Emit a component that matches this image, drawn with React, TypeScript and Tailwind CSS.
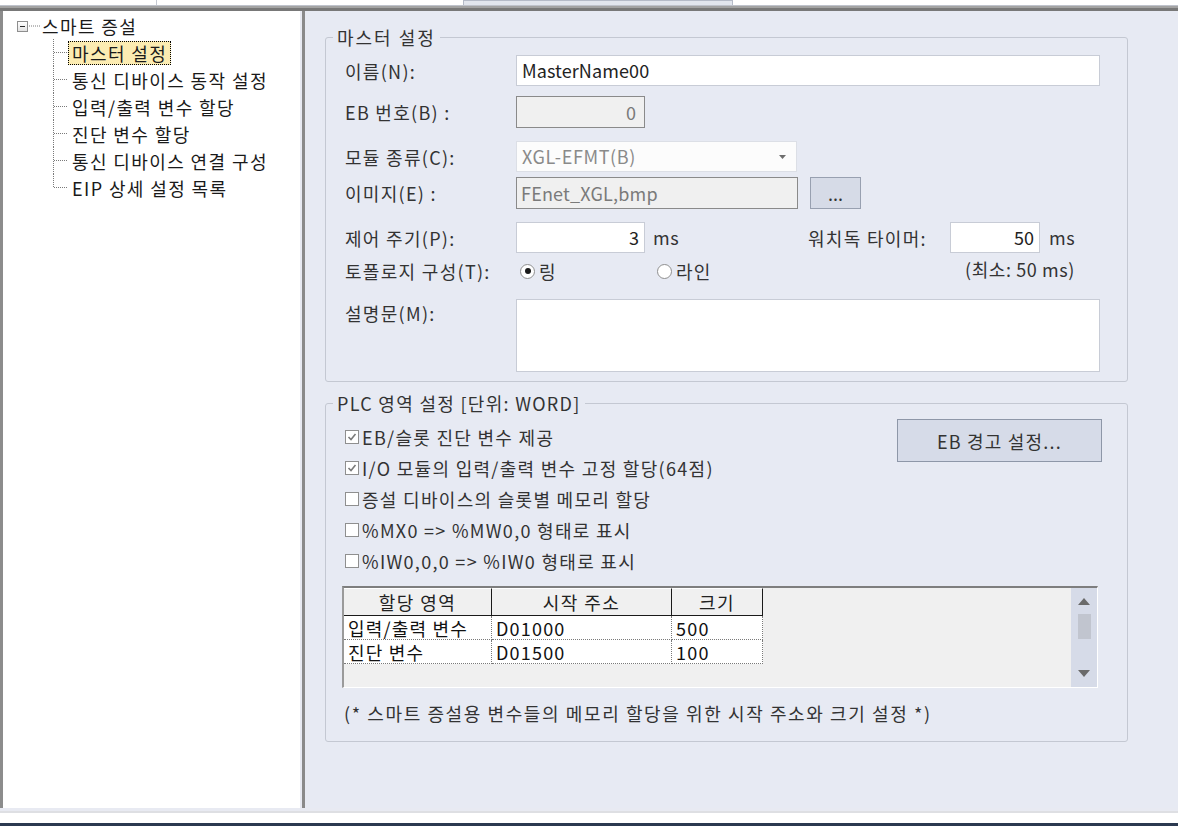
import React from "react";

const treeItems = [
  "마스터 설정",
  "통신 디바이스 동작 설정",
  "입력/출력 변수 할당",
  "진단 변수 할당",
  "통신 디바이스 연결 구성",
  "EIP 상세 설정 목록",
];

function Connector({ last }: { last?: boolean }) {
  return (
    <svg width="16" height="27" className="shrink-0">
      <line x1="1.5" y1="0" x2="1.5" y2={last ? 13.5 : 27} stroke="#7a7a7a" strokeDasharray="1 1" />
      <line x1="2" y1="13.5" x2="16" y2="13.5" stroke="#7a7a7a" strokeDasharray="1 1" />
    </svg>
  );
}

function Tree() {
  return (
    <div className="flex-1 bg-white pt-[2px] text-[18px] tracking-[1.4px] text-[#1a1a1a]">
      <div className="flex items-center h-[26px] pl-[14px]">
        <div className="w-[11px] h-[11px] border border-[#8e8e8e] bg-gradient-to-b from-white to-[#e2e2e2] flex items-center justify-center">
          <div className="w-[5px] h-px bg-[#2a2a2a]" />
        </div>
        <svg width="12" height="2" className="shrink-0">
          <line x1="1" y1="1" x2="12" y2="1" stroke="#7a7a7a" strokeDasharray="1 1" />
        </svg>
        <span className="ml-[2px] leading-[22px]">스마트 증설</span>
      </div>
      <div className="pl-[49px]">
        {treeItems.map((t, i) => (
          <div key={t} className="flex items-center h-[27px]">
            <Connector last={i === treeItems.length - 1} />
            {i === 0 ? (
              <span className="h-[24px] px-[3px] leading-[22px] bg-[#fcecb2] border border-dotted border-black">{t}</span>
            ) : (
              <span className="px-[4px] leading-[22px]">{t}</span>
            )}
          </div>
        ))}
      </div>
    </div>
  );
}

function Label({ children, w = "w-[171px]" }: { children: React.ReactNode; w?: string }) {
  return <span className={`${w} shrink-0 tracking-[1.3px] leading-[22px]`}>{children}</span>;
}

function Checkbox({ checked, label }: { checked?: boolean; label: string }) {
  return (
    <div className="flex items-center h-[31px] pl-[3px]">
      <div className="w-[14px] h-[14px] border border-[#8f8f8f] bg-white flex items-center justify-center">
        {checked && (
          <svg width="10" height="10" viewBox="0 0 10 10">
            <path d="M1.5 5 L4 7.5 L8.5 2" fill="none" stroke="#7a7a7a" strokeWidth="1.6" />
          </svg>
        )}
      </div>
      <span className="ml-[3px] tracking-[1.3px] leading-[22px]">{label}</span>
    </div>
  );
}

function Radio({ checked, label }: { checked?: boolean; label: string }) {
  return (
    <div className="flex items-center">
      <div className="w-[15px] h-[15px] rounded-full border border-[#8f8f8f] bg-white flex items-center justify-center">
        {checked && <div className="w-[6px] h-[6px] rounded-full bg-[#1a1a1a]" />}
      </div>
      <span className="ml-[4px] leading-[22px] tracking-[1.2px]">{label}</span>
    </div>
  );
}

function Table() {
  const rows = [
    ["입력/출력 변수", "D01000", "500"],
    ["진단 변수", "D01500", "100"],
  ];
  return (
    <div className="flex h-[102px] w-[756px] bg-[#f0f0f0] border-t-2 border-l-2 border-t-[#7e7e7e] border-l-[#9a9a9a] border-r border-b border-r-white border-b-white">
      <div className="flex-1">
        <div className="grid grid-cols-[148px_180px_91px] w-[419px]">
          {["할당 영역", "시작 주소", "크기"].map((h) => (
            <div key={h} className="h-[28px] bg-[#f0f0f0] border-r border-b border-[#1a1a1a] border-t border-t-white flex items-center justify-center text-[#222] tracking-[1.4px] leading-[22px]">
              {h}
            </div>
          ))}
          {rows.map((r) =>
            r.map((c, j) => (
              <div key={r[0] + j} className="h-[24px] bg-white border-r border-b border-dotted border-[#7a7a7a] flex items-center pl-[4px] text-[#111] leading-[20px] tracking-[1.2px]">
                {c}
              </div>
            ))
          )}
        </div>
      </div>
      <div className="w-[26px] bg-[#d6dbe8] flex flex-col items-center">
        <svg width="12" height="7" className="mt-[10px]" viewBox="0 0 12 7">
          <path d="M0 7 L6 0 L12 7 Z" fill="#6a6a6a" />
        </svg>
        <div className="mt-[9px] w-[13px] h-[25px] bg-[#c1c5cf]" />
        <div className="flex-1" />
        <svg width="12" height="7" className="mb-[10px]" viewBox="0 0 12 7">
          <path d="M0 0 L12 0 L6 7 Z" fill="#6a6a6a" />
        </svg>
      </div>
    </div>
  );
}

export default function App() {
  return (
    <div className="w-[1178px] h-[826px] flex flex-col bg-white overflow-hidden font-['Noto_Sans_CJK_KR',sans-serif] text-[18px] text-[#333]">
      <div className="h-[6px] flex bg-white border-b border-[#bfc3cc]">
        <div className="w-[157px] border-r border-[#c6cad3]" />
        <div className="w-[306px]" />
        <div className="w-[270px] bg-[#e2e6ee] border-x border-t border-[#b5bbc8]" />
      </div>
      <div className="h-[2px] bg-[#a3a3a3]" />
      <div className="h-[3px] bg-[#787878]" />
      <div className="flex-1 flex min-h-0">
        <aside className="w-[305px] flex border-l-[3px] border-[#8c8c8c]">
          <Tree />
          <div className="w-[2px] bg-[#e8eaf2]" />
          <div className="w-[3px] bg-[#8a8a8a]" />
        </aside>
        <main className="flex-1 bg-[#e7eaf3] pl-[20px] pt-[15px]">
          <fieldset className="w-[803px] border border-[#c4c8d2] rounded-[3px]">
            <legend className="ml-[7px] px-[4px] leading-[22px] tracking-[2px]">마스터 설정</legend>
            <div className="px-[19px] pb-[9px]">
              <div className="flex items-center h-[31px] mt-[7px]">
                <Label>이름(N):</Label>
                <div className="w-[584px] h-full bg-white border border-[#c8ccd6] flex items-center pl-[5px] text-[#222] tracking-[0.1px]">MasterName00</div>
              </div>
              <div className="flex items-center h-[32px] mt-[10px]">
                <Label>EB 번호(B) :</Label>
                <div className="w-[129px] h-full bg-[#f0f0f0] border border-[#8a8a8a] flex items-center justify-end pr-[8px] text-[#7a7a7a]">0</div>
              </div>
              <div className="flex items-center h-[31px] mt-[13px]">
                <Label>모듈 종류(C):</Label>
                <div className="w-[281px] h-full bg-[#fcfcfc] border border-[#dcdfe6] flex items-center pl-[5px] text-[#8a8a8a] tracking-[0.6px]">
                  <span className="flex-1">XGL-EFMT(B)</span>
                  <svg width="7" height="4" viewBox="0 0 7 4" className="mr-[10px]">
                    <path d="M0 0 L7 0 L3.5 4 Z" fill="#6d6d6d" />
                  </svg>
                </div>
              </div>
              <div className="flex items-center h-[32px] mt-[5px]">
                <Label>이미지(E) :</Label>
                <div className="w-[282px] h-full bg-[#f0f0f0] border border-[#8a8a8a] flex items-center pl-[4px] text-[#7a7a7a] tracking-[0.2px]">FEnet_XGL,bmp</div>
                <div className="ml-[12px] w-[51px] h-full bg-[#d6dbe7] border border-[#98a0b0] flex items-center justify-center text-[#333] leading-[22px]">...</div>
              </div>
              <div className="flex items-center h-[31px] mt-[13px]">
                <Label>제어 주기(P):</Label>
                <div className="w-[129px] h-full bg-white border border-[#c8ccd6] flex items-center justify-end pr-[5px] text-[#222]">3</div>
                <span className="w-[163px] pl-[8px] tracking-[0.5px]">ms</span>
                <Label w="w-[142px]">워치독 타이머:</Label>
                <div className="w-[90px] h-full bg-white border border-[#c8ccd6] flex items-center justify-end pr-[5px] text-[#222]">50</div>
                <span className="pl-[9px] tracking-[0.5px]">ms</span>
              </div>
              <div className="flex items-center h-[24px] mt-[6px]">
                <Label>토폴로지 구성(T):</Label>
                <div className="w-[141px] pl-[4px]">
                  <Radio checked label="링" />
                </div>
                <Radio label="라인" />
                <span className="ml-auto mr-[33px] -mt-[3px] tracking-[0.6px]">(최소: 50 ms)</span>
              </div>
              <div className="flex h-[73px] mt-[16px]">
                <span className="w-[171px] shrink-0 pt-[3px] tracking-[1.3px] leading-[22px]">설명문(M):</span>
                <div className="w-[584px] h-full bg-white border border-[#c8ccd6]" />
              </div>
            </div>
          </fieldset>

          <fieldset className="mt-[10px] w-[803px] border border-[#c4c8d2] rounded-[3px]">
            <legend className="ml-[7px] px-[4px] leading-[22px] tracking-[1.3px]">PLC 영역 설정 [단위: WORD]</legend>
            <div className="px-[16px] pb-[16px]">
              <div className="flex mt-[7px]">
                <div className="flex flex-col">
                  <Checkbox checked label="EB/슬롯 진단 변수 제공" />
                  <Checkbox checked label="I/O 모듈의 입력/출력 변수 고정 할당(64점)" />
                  <Checkbox label="증설 디바이스의 슬롯별 메모리 할당" />
                  <Checkbox label="%MX0 => %MW0,0 형태로 표시" />
                  <Checkbox label="%IW0,0,0 => %IW0 형태로 표시" />
                </div>
                <div className="ml-auto mr-[9px] -mt-[2px] w-[205px] h-[43px] bg-[#d6dbe8] border border-[#8e97a8] flex items-center justify-center text-[#333] tracking-[1.2px] leading-[22px]">
                  EB 경고 설정...
                </div>
              </div>
              <div className="mt-[10px]">
                <Table />
              </div>
              <div className="mt-[13px] h-[24px] pl-[2px] flex items-center tracking-[1.6px]">
                (* 스마트 증설용 변수들의 메모리 할당을 위한 시작 주소와 크기 설정 *)
              </div>
            </div>
          </fieldset>
        </main>
      </div>
      <div className="h-[3px] bg-[#e8eaf2]" />
      <div className="h-[2px] bg-[#dedfe3]" />
      <div className="h-[10px] bg-white" />
      <div className="h-[3px] bg-[#2b3950]" />
    </div>
  );
}
